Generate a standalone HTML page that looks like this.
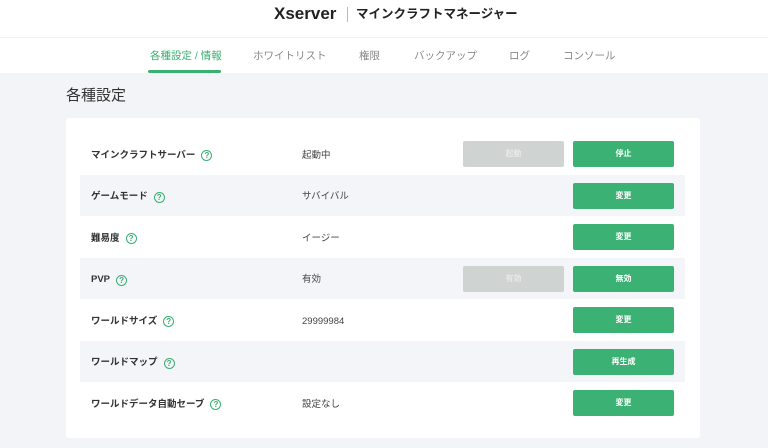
<!DOCTYPE html>
<html><head><meta charset="utf-8"><style>
*{margin:0;padding:0;box-sizing:border-box}
body{width:768px;height:448px;overflow:hidden;background:#f3f4f7;font-family:"Liberation Sans","Noto Sans CJK JP",sans-serif;color:#333;position:relative}
.hdr{position:absolute;left:0;top:0;width:768px;height:38px;background:#fff;border-bottom:1px solid #f0f0f0}
.logo{position:absolute;left:274px;top:4px;font-weight:bold;font-size:17px;line-height:20px;color:#222}
.sep{position:absolute;left:347px;top:7px;width:1px;height:15px;background:#bbb}
.ttl{position:absolute;left:356px;top:5px;font-weight:bold;font-size:12.5px;line-height:18px;color:#222}
.nav{position:absolute;left:0;top:38px;width:768px;height:35px;background:#fff}
.nav span{position:absolute;top:11px;font-size:10.5px;line-height:14px;color:#888}
.nav .act{color:#3aaf72}
.ul{position:absolute;left:148px;top:70px;width:73px;height:3px;background:#3aaf72;border-radius:2px}
h1{position:absolute;left:66px;top:86px;font-size:15px;line-height:20px;font-weight:normal;color:#333}
.card{position:absolute;left:66px;top:118px;width:634px;height:320px;background:#fff;border-radius:3px}
.row{position:absolute;left:14px;width:605px;height:41.5px}
.row.g{background:#f4f5f8}
.lb,.v{position:absolute;top:2px;height:41.5px;display:flex;align-items:center;font-size:9.5px;line-height:12px}
.lb{left:11px;font-weight:bold;color:#333}
.v{left:222px;color:#444}
.q{display:inline-block;width:11px;height:11px;border:1px solid #3aaf72;border-radius:50%;color:#3aaf72;font-size:8px;line-height:9px;text-align:center;margin-left:6px;font-weight:bold}
.b{position:absolute;top:8px;width:101px;height:26px;border-radius:2px;background:#3bb273;color:#fff;font-size:8px;font-weight:bold;text-align:center;line-height:26px}
.b.d{background:#cfd3d1;color:#e8e8e8}
</style></head><body>
<div class="hdr"><div class="logo">Xserver</div><div class="sep"></div><div class="ttl">マインクラフトマネージャー</div></div>
<div class="nav">
<span class="act" style="left:150px">各種設定 / 情報</span>
<span style="left:253px">ホワイトリスト</span>
<span style="left:359px">権限</span>
<span style="left:414px">バックアップ</span>
<span style="left:509px">ログ</span>
<span style="left:563px">コンソール</span>
</div>
<div class="ul"></div>
<h1>各種設定</h1>
<div class="card">
<div class="row" style="top:15px"><div class="lb">マインクラフトサーバー<span class="q">?</span></div><div class="v">起動中</div><div class="b d" style="left:383px">起動</div><div class="b" style="left:493px">停止</div></div>
<div class="row g" style="top:56.5px"><div class="lb">ゲームモード<span class="q">?</span></div><div class="v">サバイバル</div><div class="b" style="left:493px">変更</div></div>
<div class="row" style="top:98px"><div class="lb">難易度<span class="q">?</span></div><div class="v">イージー</div><div class="b" style="left:493px">変更</div></div>
<div class="row g" style="top:139.5px"><div class="lb">PVP<span class="q">?</span></div><div class="v">有効</div><div class="b d" style="left:383px">有効</div><div class="b" style="left:493px">無効</div></div>
<div class="row" style="top:181px"><div class="lb">ワールドサイズ<span class="q">?</span></div><div class="v">29999984</div><div class="b" style="left:493px">変更</div></div>
<div class="row g" style="top:222.5px"><div class="lb">ワールドマップ<span class="q">?</span></div><div class="b" style="left:493px">再生成</div></div>
<div class="row" style="top:264px"><div class="lb">ワールドデータ自動セーブ<span class="q">?</span></div><div class="v">設定なし</div><div class="b" style="left:493px">変更</div></div>
</div>
</body></html>
